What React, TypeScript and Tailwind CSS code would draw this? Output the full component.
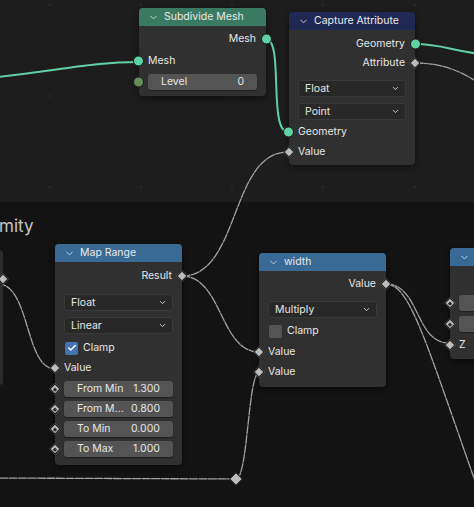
import type { ReactNode } from "react";
import { ChevronDown, Check } from "lucide-react";

type Sock = "geo" | "int" | "field" | "dot";

function Socket({ kind, side }: { kind: Sock; side: "l" | "r" }) {
  const pos = side === "l" ? "left-[-6px]" : "right-[-6px]";
  if (kind === "geo" || kind === "int") {
    return (
      <span
        className={`absolute top-1/2 -translate-y-1/2 ${pos} h-[11px] w-[11px] rounded-full border border-[#1a1a1a] ${
          kind === "geo" ? "bg-[#5fd1a4]" : "bg-[#648f5c]"
        }`}
      />
    );
  }
  return (
    <span
      className={`absolute top-1/2 -translate-y-1/2 ${pos} flex h-[12px] w-[12px] items-center justify-center`}
    >
      <span className="flex h-[8px] w-[8px] rotate-45 items-center justify-center border border-[#1a1a1a] bg-[#bdbdbd]">
        {kind === "dot" && <span className="h-[3px] w-[3px] bg-[#2a2a2a]" />}
      </span>
    </span>
  );
}

function Node({
  x,
  y,
  w,
  head,
  title,
  children,
}: {
  x: number;
  y: number;
  w: number;
  head: string;
  title: string;
  children: ReactNode;
}) {
  return (
    <div
      className="absolute rounded-[4px] bg-[#303030] shadow-[0_2px_6px_rgba(0,0,0,0.55)]"
      style={{ left: x, top: y, width: w }}
    >
      <div className={`flex h-[18px] items-center gap-[5px] rounded-t-[4px] pl-[9px] ${head}`}>
        <ChevronDown className="h-[11px] w-[11px] text-[#e6e6e6]" strokeWidth={1.8} />
        {title && <span className="truncate text-[10.5px] text-[#e8e8e8]">{title}</span>}
      </div>
      {children}
    </div>
  );
}

function Out({ label, kind, h = 20 }: { label: string; kind: Sock; h?: number }) {
  return (
    <div className="relative flex items-center justify-end pr-[10px]" style={{ height: h }}>
      <span>{label}</span>
      <Socket kind={kind} side="r" />
    </div>
  );
}

function In({ label, kind, h = 20 }: { label: string; kind: Sock; h?: number }) {
  return (
    <div className="relative flex items-center pl-[9px]" style={{ height: h }}>
      <span>{label}</span>
      <Socket kind={kind} side="l" />
    </div>
  );
}

function Field({ label, value, kind }: { label: string; value: string; kind?: Sock }) {
  return (
    <div className="relative h-[20px] px-[9px] py-[2px]">
      <div className="flex h-full items-center justify-between rounded-[3px] bg-[#545454] px-[13px] shadow-[0_1px_1px_rgba(0,0,0,0.4)]">
        <span>{label}</span>
        <span>{value}</span>
      </div>
      {kind && <Socket kind={kind} side="l" />}
    </div>
  );
}

function Select({ label }: { label: string }) {
  return (
    <div className="flex h-[17px] items-center justify-between rounded-[3px] border border-[#3a3a3a] bg-[#282828] pl-[6px] pr-[5px]">
      <span>{label}</span>
      <ChevronDown className="h-[9px] w-[9px] text-[#d0d0d0]" strokeWidth={2.5} />
    </div>
  );
}

function Toggle({ on }: { on: boolean }) {
  return (
    <div className="flex h-[16px] items-center gap-[5px] px-[10px]">
      <span
        className={`flex h-[13px] w-[13px] items-center justify-center rounded-[2px] ${
          on ? "bg-[#4772b3]" : "bg-[#545454]"
        }`}
      >
        {on && <Check className="h-[10px] w-[10px] text-white" strokeWidth={3.5} />}
      </span>
      <span>Clamp</span>
    </div>
  );
}

const dots = [50, 141, 232, 323, 415].flatMap((cx) => [5, 96, 187].map((cy) => ({ cx, cy })));

export default function App() {
  return (
    <div
      className="relative h-[507px] w-[474px] overflow-hidden bg-[#131313] text-[10.5px] text-[#e6e6e6]"
      style={{ fontFamily: "Inter, 'DejaVu Sans', sans-serif" }}
    >
      {/* upper canvas area, above the frame */}
      <div className="h-[202px] bg-[#1d1d1d]" />
      <div className="absolute left-[-1px] top-[214px] text-[17px] text-[#c4c4c4]">mity</div>

      <svg className="absolute inset-0" width="474" height="507">
        {dots.map((d) => (
          <circle key={`${d.cx}-${d.cy}`} cx={d.cx} cy={d.cy} r="1.3" fill="#2a2a2a" />
        ))}
        <g fill="none" strokeLinecap="round">
          <path d="M -60 82 C 40 76, 80 62, 139 62" stroke="#5fd1a4" strokeWidth="2" />
          <path d="M 266 39 C 284 39, 268 132, 288 132" stroke="#5fd1a4" strokeWidth="2" />
          <path d="M 415 44 C 440 44, 450 50, 480 54" stroke="#5fd1a4" strokeWidth="2" />
          <g stroke="#a3a3a3" strokeWidth="1.3" strokeDasharray="8 1.5">
            <path d="M 415 63 C 440 63, 460 70, 480 84" />
            <path d="M 182 276 C 240 276, 230 152, 288 152" />
            <path d="M 182 276 C 222 276, 220 352, 259 352" />
            <path d="M -2 284 C 30 284, 25 369, 55 369" />
            <path d="M -10 478 L 236 479" />
            <path d="M 236 479 C 248 479, 248 373, 259 373" />
            <path d="M 386 284 C 420 284, 415 343, 449 343" />
            <path d="M 386 284 C 410 284, 425 340, 480 495" />
          </g>
        </g>
        <rect x="231.5" y="474.5" width="9" height="9" transform="rotate(45 236 479)" fill="#bdbdbd" stroke="#1a1a1a" />
      </svg>

      {/* sliver of a node past the left edge */}
      <div className="absolute left-[-120px] top-[250px] h-[135px] w-[123px] rounded-[4px] bg-[#2c2c2c]">
        <div className="absolute right-0 top-[29px]">
          <Socket kind="field" side="r" />
        </div>
      </div>

      <Node x={139} y={8} w={127} head="bg-[#3a7a63]" title="Subdivide Mesh">
        <div className="pt-[3px]" />
        <Out label="Mesh" kind="geo" />
        <In label="Mesh" kind="geo" h={23} />
        <Field label="Level" value="0" kind="int" />
        <div className="h-[4px]" />
      </Node>

      <Node x={289} y={12} w={126} head="bg-[#1f2852]" title="Capture Attribute">
        <div className="pt-[5px]" />
        <Out label="Geometry" kind="geo" h={18} />
        <Out label="Attribute" kind="field" />
        <div className="flex flex-col gap-[6px] px-[9px] pt-[7px]">
          <Select label="Float" />
          <Select label="Point" />
        </div>
        <div className="pt-[2px]" />
        <In label="Geometry" kind="geo" />
        <In label="Value" kind="field" />
        <div className="h-[3px]" />
      </Node>

      <Node x={55} y={244} w={127} head="bg-[#386a95]" title="Map Range">
        <div className="pt-[4px]" />
        <Out label="Result" kind="field" />
        <div className="flex flex-col gap-[6px] px-[9px] pt-[8px]">
          <Select label="Float" />
          <Select label="Linear" />
        </div>
        <div className="pt-[6px]" />
        <Toggle on />
        <In label="Value" kind="field" h={23} />
        <Field label="From Min" value="1.300" kind="dot" />
        <Field label="From M..." value="0.800" kind="dot" />
        <Field label="To Min" value="0.000" kind="dot" />
        <Field label="To Max" value="1.000" kind="dot" />
        <div className="h-[6px]" />
      </Node>

      <Node x={259} y={253} w={127} head="bg-[#386a95]" title="width">
        <div className="pt-[3px]" />
        <Out label="Value" kind="field" />
        <div className="px-[9px] pt-[7px]">
          <Select label="Multiply" />
        </div>
        <div className="pt-[5px]" />
        <Toggle on={false} />
        <div className="pt-[3px]" />
        <In label="Value" kind="field" />
        <In label="Value" kind="field" />
        <div className="h-[5px]" />
      </Node>

      <Node x={450} y={248} w={127} head="bg-[#386a95]" title="">
        <div className="pt-[27px]" />
        <Field label="" value="" kind="dot" />
        <div className="pt-[1px]" />
        <Field label="" value="" kind="dot" />
        <In label="Z" kind="field" h={22} />
        <div className="h-[3px]" />
      </Node>
    </div>
  );
}
